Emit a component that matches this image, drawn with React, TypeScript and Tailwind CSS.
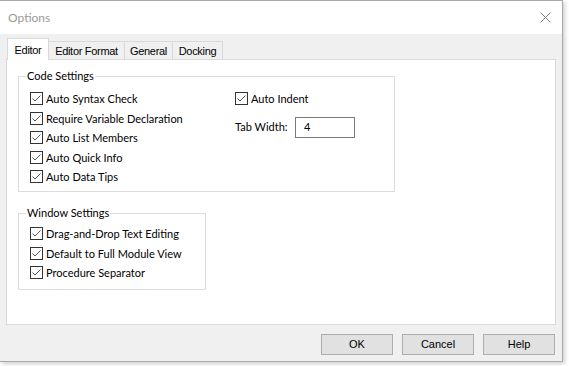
import React from "react";

const uiFont = { fontFamily: "Lato, 'Noto Sans', sans-serif" };

function Check({ label }: { label: string }) {
  return (
    <div className="flex items-center h-[19.5px] gap-[3px]">
      <span className="w-[13px] h-[13px] border border-[#333333] bg-white flex items-center justify-center shrink-0">
        <svg width="11" height="11" viewBox="0 0 11 11">
          <path d="M1.5 5.5 L4 8 L9.5 2.5" fill="none" stroke="#555555" strokeWidth="1" />
        </svg>
      </span>
      <span className="text-[11px] text-black leading-none whitespace-nowrap">{label}</span>
    </div>
  );
}

export default function App() {
  const tabFont = { fontFamily: "'Liberation Sans', Arial, sans-serif" };
  return (
    <div className="w-[569px] h-[366px] bg-white overflow-hidden" style={uiFont}>
      <div className="w-[563px] h-[362px] flex flex-col border-t border-r border-b border-[#a9a9a9] bg-[#f0f0f0] shadow-[2px_2px_4px_rgba(0,0,0,0.18)]">
        {/* Title bar */}
        <div className="h-[33px] bg-white flex items-center justify-between pl-[8px] pr-[11px] shrink-0">
          <span className="text-[12px] text-[#9a9a9a]">Options</span>
          <svg width="11" height="11" viewBox="0 0 11 11">
            <path d="M0.5 0.5 L10.5 10.5 M10.5 0.5 L0.5 10.5" stroke="#7a7a7a" strokeWidth="1" />
          </svg>
        </div>
        {/* Body */}
        <div className="flex-1 flex flex-col px-[6px] pt-[4px]">
          {/* Tabs */}
          <div className="flex items-end h-[22px] pl-[1px] text-[11px] text-black" style={tabFont}>
            <div className="relative z-10 h-[22px] w-[42px] bg-white border-l border-t border-r border-[#d9d9d9] flex items-start justify-center pt-[3px] tracking-[-0.3px]">
              Editor
            </div>
            <div className="h-[19px] w-[76px] bg-[#f0f0f0] border-t border-r border-[#d9d9d9] flex items-center justify-center tracking-[-0.3px]">
              Editor Format
            </div>
            <div className="h-[19px] w-[48px] bg-[#f0f0f0] border-t border-r border-[#d9d9d9] flex items-center justify-center tracking-[-0.3px]">
              General
            </div>
            <div className="h-[19px] w-[50px] bg-[#f0f0f0] border-t border-r border-[#d9d9d9] flex items-center justify-center tracking-[-0.3px]">
              Docking
            </div>
          </div>
          {/* Panel */}
          <div className="h-[266px] -mt-px border border-[#d9d9d9] bg-white pl-[11px] pt-[9px]">
            <fieldset className="w-[377px] h-[123px] border border-[#dcdcdc] m-0 p-0">
              <legend className="ml-[7px] px-[1px] text-[11px] leading-[14px] text-black">Code Settings</legend>
              <div className="flex pt-[6px] pl-[11px]">
                <div className="w-[205px] flex flex-col">
                  <Check label="Auto Syntax Check" />
                  <Check label="Require Variable Declaration" />
                  <Check label="Auto List Members" />
                  <Check label="Auto Quick Info" />
                  <Check label="Auto Data Tips" />
                </div>
                <div className="flex flex-col">
                  <Check label="Auto Indent" />
                  <div className="flex items-center mt-[8px]">
                    <span className="text-[11px] w-[60px] whitespace-nowrap">Tab Width:</span>
                    <div className="w-[60px] h-[21px] border border-[#7a7a7a] bg-white flex items-center pl-[8px] text-[11px]">
                      4
                    </div>
                  </div>
                </div>
              </div>
            </fieldset>
            <fieldset className="w-[188px] h-[84px] mt-[14px] border border-[#dcdcdc] m-0 p-0">
              <legend className="ml-[7px] px-[1px] text-[11px] leading-[14px] text-black">Window Settings</legend>
              <div className="flex flex-col pt-[4px] pl-[11px]">
                <Check label="Drag-and-Drop Text Editing" />
                <Check label="Default to Full Module View" />
                <Check label="Procedure Separator" />
              </div>
            </fieldset>
          </div>
          {/* Buttons */}
          <div className="flex justify-end gap-[9px] mt-[9px] pr-[1px] text-[11px]" style={tabFont}>
            <button className="w-[72px] h-[21px] bg-[#e1e1e1] border border-[#adadad] text-black">OK</button>
            <button className="w-[72px] h-[21px] bg-[#e1e1e1] border border-[#adadad] text-black">Cancel</button>
            <button className="w-[72px] h-[21px] bg-[#e1e1e1] border border-[#adadad] text-black">Help</button>
          </div>
        </div>
      </div>
    </div>
  );
}
